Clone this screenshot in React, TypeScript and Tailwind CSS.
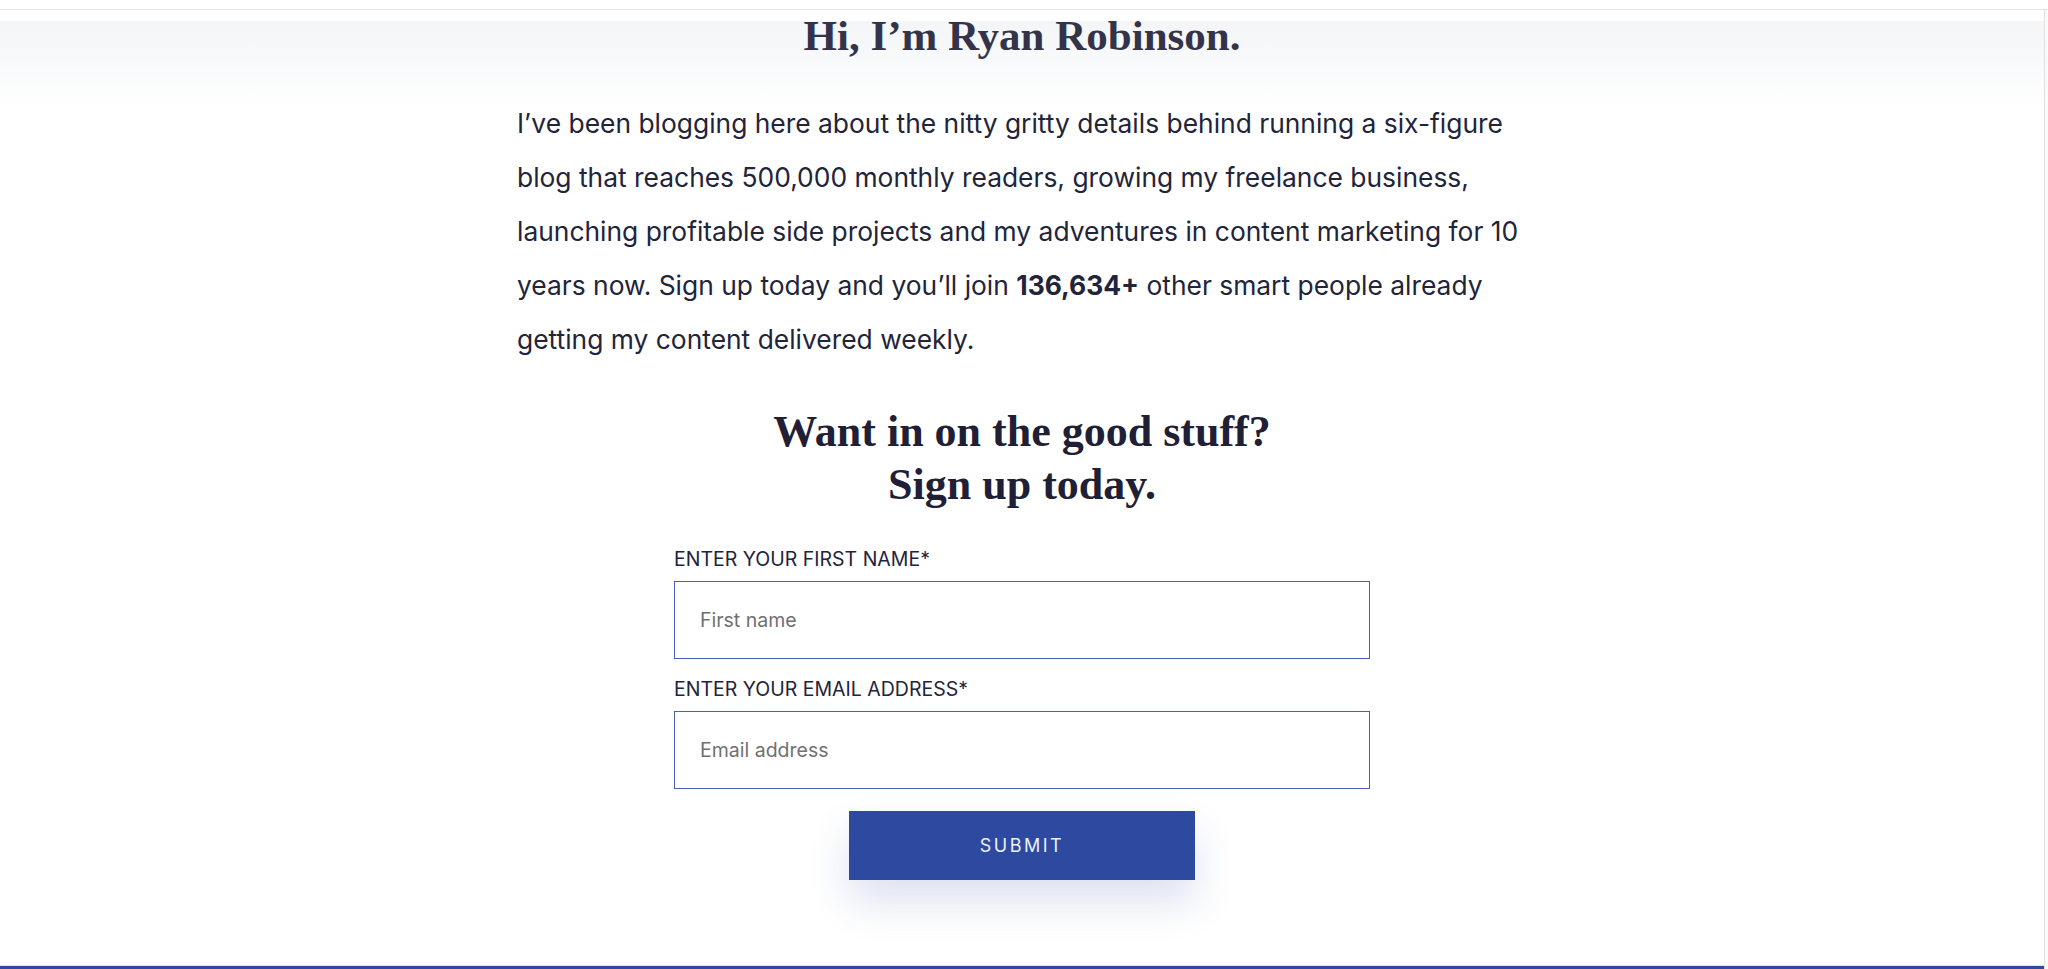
import React, { useState } from 'react';

const serif = "font-['Liberation_Serif',_'Times_New_Roman',_serif]";
const sans = "font-['Inter',_'Noto_Sans',_sans-serif]";

const Field: React.FC<{ label: string; placeholder: string; type?: string; className?: string }> = ({
    label,
    placeholder,
    type = 'text',
    className = '',
}) => {
    const [value, setValue] = useState('');
    return (
        <div className={className}>
            <label className={`block ${sans} text-[19.5px] leading-[24px] text-[#22243a] mb-[10px]`}>{label}</label>
            <input
                type={type}
                value={value}
                onChange={(e) => setValue(e.target.value)}
                placeholder={placeholder}
                className={`block w-full h-[78px] border border-[#4a5fbd] bg-white px-[25px] ${sans} text-[19.5px] text-[#22243a] placeholder:text-[#707070] outline-none`}
            />
        </div>
    );
};

export default function App() {
    return (
        <div className="h-[969px] w-full flex flex-col bg-white overflow-hidden">
            <div className="h-[9px] bg-white" />
            <div className="flex-1 flex border-t border-[#e4e4e4] min-h-0">
                <main className="flex-1 flex flex-col min-w-0">
                    <div className="h-[11px] bg-white" />
                    <section className="flex-1 flex flex-col items-center bg-[linear-gradient(to_bottom,#f3f5f7_0px,#ffffff_90px)]">
                        {/* Intro */}
                        <h1 className={`${serif} font-bold text-[43px] leading-[29px] text-[#33344a] text-center`}>
                            Hi, I’m Ryan Robinson.
                        </h1>
                        <p className={`w-[1010px] mt-[46px] ${sans} text-[26.4px] leading-[54px] text-[#22243a]`}>
                            I’ve been blogging here about the nitty gritty details behind running a six-figure blog that
                            reaches 500,000 monthly readers, growing my freelance business, launching profitable side
                            projects and my adventures in content marketing for 10 years now. Sign up today and you’ll
                            join <strong className="font-bold">136,634+</strong> other smart people already getting my
                            content delivered weekly.
                        </p>

                        {/* Signup */}
                        <h2 className={`mt-[39px] ${serif} font-bold text-[44px] leading-[53px] text-[#1f2035] text-center`}>
                            Want in on the good stuff?
                            <br />
                            Sign up today.
                        </h2>
                        <form className="w-[696px] mt-[36px] flex flex-col" onSubmit={(e) => e.preventDefault()}>
                            <Field label="ENTER YOUR FIRST NAME*" placeholder="First name" />
                            <Field label="ENTER YOUR EMAIL ADDRESS*" placeholder="Email address" type="email" className="mt-[18px]" />
                            <button
                                type="submit"
                                className={`self-center mt-[22px] w-[346px] h-[69px] bg-[#2e4aa0] ${sans} text-[18px] tracking-[2.5px] text-[#eef0f8] shadow-[0_22px_40px_rgba(46,74,160,0.16)]`}
                            >
                                SUBMIT
                            </button>
                        </form>
                    </section>
                    <div className="h-px bg-[#dfe3ee]" />
                    <div className="h-[3px] bg-[#2e4aa0]" />
                </main>
                <div className="w-[4px] border-l border-[#e0e0e0] bg-[#fafafa]" />
            </div>
        </div>
    );
}
